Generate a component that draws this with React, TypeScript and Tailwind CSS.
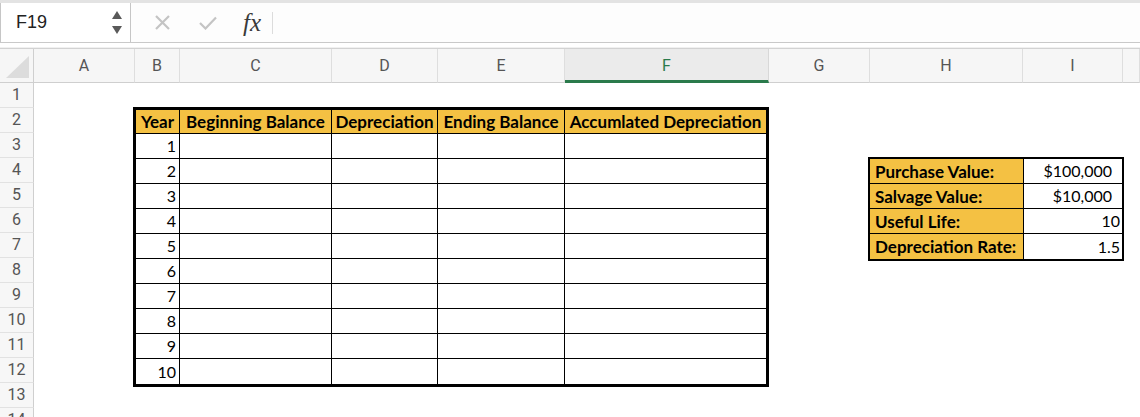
import React from 'react'

const font = { fontFamily: 'Lato, "Open Sans", sans-serif' }

const colHeaders = [
  { label: 'A', w: 101 },
  { label: 'B', w: 45 },
  { label: 'C', w: 152 },
  { label: 'D', w: 106 },
  { label: 'E', w: 127 },
  { label: 'F', w: 204 },
  { label: 'G', w: 101 },
  { label: 'H', w: 153 },
  { label: 'I', w: 100 },
  { label: '', w: 0 },
]

const colStart = [
  'col-start-2',
  'col-start-3',
  'col-start-4',
  'col-start-5',
  'col-start-6',
  'col-start-7',
  'col-start-8',
  'col-start-9',
  'col-start-10',
  'col-start-11',
]

const rowStart = [
  'row-start-2',
  'row-start-3',
  'row-start-4',
  'row-start-5',
  'row-start-6',
  'row-start-7',
  'row-start-8',
  'row-start-9',
  'row-start-10',
  'row-start-11',
  'row-start-12',
  'row-start-13',
  'row-start-14',
  'row-start-15',
]

const years = [1, 2, 3, 4, 5, 6, 7, 8, 9, 10]

const info = [
  { label: 'Purchase Value:', value: '$100,000', pad: 'pr-[10px]' },
  { label: 'Salvage Value:', value: '$10,000', pad: 'pr-[10px]' },
  { label: 'Useful Life:', value: '10', pad: 'pr-[2px]' },
  { label: 'Depreciation Rate:', value: '1.5', pad: 'pr-[2px]' },
]

function FormulaBar() {
  return (
    <div className="flex h-[47px] flex-col bg-white">
      <div className="h-[3px] bg-[#e3e3e3]" />
      <div className="flex h-[40px] border-b border-[#c9c9c9]">
        {/* name box */}
        <div className="flex w-[131px] items-center justify-between border-x border-[#c6c6c6] bg-white pl-[15px] pr-[8px]">
          <span className="text-[18px] text-[#222]" style={{ fontFamily: '"Liberation Sans", Arial, sans-serif' }}>
            F19
          </span>
          <div className="flex flex-col gap-[7px]">
            <svg width="10" height="8" viewBox="0 0 10 8">
              <path d="M5 0 L10 8 L0 8 Z" fill="#5a5a5a" />
            </svg>
            <svg width="10" height="8" viewBox="0 0 10 8">
              <path d="M0 0 L10 0 L5 8 Z" fill="#5a5a5a" />
            </svg>
          </div>
        </div>
        <div className="flex flex-1 items-center bg-[#fdfdfd] pl-[24px]">
          <svg width="15" height="15" viewBox="0 0 15 15" className="mr-[29px]">
            <path d="M1 1 L14 14 M14 1 L1 14" stroke="#c4c4c4" strokeWidth="2.2" />
          </svg>
          <svg width="18" height="14" viewBox="0 0 18 14" className="mr-[26px]">
            <path d="M1 7 L6.5 12.5 L17 1.5" stroke="#c4c4c4" strokeWidth="2.2" fill="none" />
          </svg>
          <span
            className="text-[25px] italic leading-none text-[#3a3a3a]"
            style={{ fontFamily: '"Liberation Serif", "DejaVu Serif", serif' }}
          >
            fx
          </span>
          <div className="ml-[11px] h-[22px] w-px bg-[#dcdcdc]" />
        </div>
      </div>
    </div>
  )
}

function DepreciationTable() {
  const cols = 'grid grid-cols-[44px_152px_106px_127px_201px]'
  return (
    <div
      className="col-start-3 row-start-3 -ml-[2px] -mt-[1px] w-[636px] self-start justify-self-start border-[3px] border-black bg-white text-[16px] leading-none text-black"
      style={font}
    >
      <div className={`${cols} h-[24px] border-b border-black bg-[#f4c143] text-[17px] font-bold`}>
        <div className="flex items-center justify-center border-r border-black">Year</div>
        <div className="flex items-center justify-center border-r border-black">Beginning Balance</div>
        <div className="flex items-center justify-center border-r border-black">Depreciation</div>
        <div className="flex items-center justify-center border-r border-black">Ending Balance</div>
        <div className="flex items-center justify-center">Accumlated Depreciation</div>
      </div>
      {years.map((y, i) => (
        <div key={y} className={`${cols} h-[25px] ${i < years.length - 1 ? 'border-b border-black' : ''}`}>
          <div className="flex items-center justify-end border-r border-black pr-[3px]">{y}</div>
          <div className="border-r border-black" />
          <div className="border-r border-black" />
          <div className="border-r border-black" />
          <div />
        </div>
      ))}
    </div>
  )
}

function InfoTable() {
  return (
    <div
      className="col-start-9 row-start-5 -ml-[2px] -mt-[1px] w-[256px] self-start justify-self-start border-2 border-black bg-white text-[16px] leading-none text-black"
      style={font}
    >
      {info.map((r, i) => (
        <div
          key={r.label}
          className={`grid h-[25px] grid-cols-[154px_98px] ${i < info.length - 1 ? 'border-b border-black' : ''}`}
        >
          <div className="flex items-center border-r border-black bg-[#f4c143] pl-[5px] text-[17px] font-bold">
            {r.label}
          </div>
          <div className={`flex items-center justify-end ${r.pad}`}>{r.value}</div>
        </div>
      ))}
    </div>
  )
}

export default function App() {
  const headerFont = { fontFamily: 'Roboto, "Liberation Sans", sans-serif' }
  return (
    <div className="h-[417px] w-[1140px] overflow-hidden bg-white">
      <FormulaBar />
      <div className="h-px bg-[#f0f0f0]" />
      <div className="grid grid-cols-[34px_101px_45px_152px_106px_127px_204px_101px_153px_100px_1fr] grid-rows-[34px_repeat(14,25px)] border-t border-[#d2d2d2]">
        {/* corner */}
        <div className="col-start-1 row-start-1 flex items-end justify-end border-r border-b border-[#cfcfcf] bg-[#f6f6f6] p-[4px]">
          <svg width="23" height="22" viewBox="0 0 23 22">
            <path d="M23 0 L23 22 L0 22 Z" fill="#dcdcdc" />
          </svg>
        </div>
        {colHeaders.map((c, i) => {
          const active = c.label === 'F'
          return (
            <div
              key={i}
              className={`${colStart[i]} row-start-1 flex items-center justify-center text-[16px] ${
                active
                  ? 'border-b-[3px] border-r border-b-[#2a7a4b] border-r-[#d8d8d8] bg-[#ebebeb] pt-[2px] text-[#2a7a4b]'
                  : 'border-b border-r border-b-[#cfcfcf] border-r-[#dedede] bg-[#f6f6f6] text-[#555]'
              }`}
              style={headerFont}
            >
              {c.label}
            </div>
          )
        })}
        {rowStart.map((r, i) => (
          <div
            key={r}
            className={`col-start-1 ${r} flex items-center justify-center border-r border-b border-r-[#cfcfcf] border-b-[#e2e2e2] bg-[#f7f7f7] text-[16px] text-[#555]`}
            style={headerFont}
          >
            {i + 1}
          </div>
        ))}
        <DepreciationTable />
        <InfoTable />
      </div>
    </div>
  )
}
